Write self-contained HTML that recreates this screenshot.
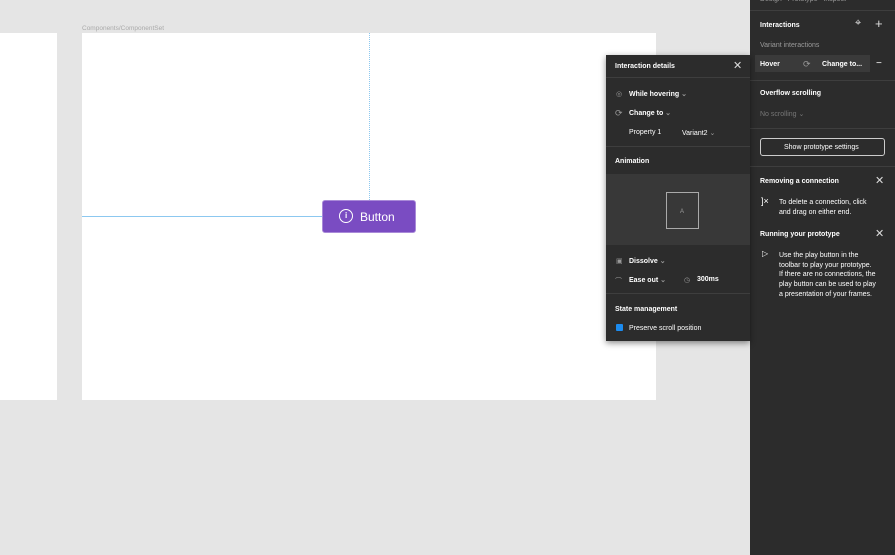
<!DOCTYPE html>
<html><head><style>
*{margin:0;padding:0;box-sizing:border-box}
body{width:895px;height:555px;background:#e5e5e5;position:relative;overflow:hidden;font-family:"Liberation Sans",sans-serif;}
.a{position:absolute}
.t{position:absolute;font-size:7px;color:#fff;white-space:nowrap;margin-top:1px}
.b{font-weight:bold}
.g{color:#9a9a9a}
.hr{position:absolute;height:1px;background:#3e3e3e}
.x{position:absolute;font-size:11px;color:#ddd}
</style></head><body>
<div class="a" style="left:0;top:33px;width:57px;height:367px;background:#fff"></div>
<div class="a" style="left:82px;top:33px;width:574px;height:367px;background:#fff"></div>
<div class="t" style="left:82px;top:24px;color:#aaa;font-size:6.5px">Components/ComponentSet</div>
<div class="a" style="left:369px;top:33px;width:0;height:167px;border-left:1px dotted #8cc8f0"></div>
<div class="a" style="left:82px;top:216px;width:240px;height:0;border-top:1px solid #8cc8f0"></div>
<div class="a" style="left:322px;top:200px;width:94px;height:33px;background:#7a4cc2;border-radius:3px;border:1px solid #a98ad8"></div>
<div class="a" style="left:339px;top:209px;width:14px;height:14px;border:1.5px solid #fff;border-radius:50%"></div>
<div class="t" style="left:345px;top:210px;font-size:8px;font-weight:bold">i</div>
<div class="t" style="left:360px;top:209px;font-size:12px">Button</div>

<div class="a" style="left:750px;top:0;width:145px;height:555px;background:#2c2c2c"></div>
<div class="hr" style="left:750px;top:10px;width:145px"></div>
<div class="t g" style="left:760px;top:-5px">Design &nbsp; Prototype &nbsp; Inspect</div>
<div class="t b" style="left:760px;top:21px">Interactions</div>
<div class="x" style="left:855px;top:17px">⌖</div>
<div class="x" style="left:875px;top:16px;font-size:13px">+</div>
<div class="t g" style="left:760px;top:41px">Variant interactions</div>
<div class="a" style="left:755px;top:55px;width:115px;height:17px;background:#3a3a3a"></div>
<div class="t b" style="left:760px;top:60px">Hover</div>
<div class="t g" style="left:803px;top:58px;font-size:9px">⟳</div>
<div class="t b" style="left:822px;top:60px">Change to...</div>
<div class="t" style="left:876px;top:57px;font-size:10px">−</div>
<div class="hr" style="left:750px;top:80px;width:145px"></div>
<div class="t b" style="left:760px;top:89px">Overflow scrolling</div>
<div class="t g" style="left:760px;top:109px;color:#777">No scrolling ⌄</div>
<div class="hr" style="left:750px;top:128px;width:145px"></div>
<div class="a" style="left:760px;top:138px;width:125px;height:18px;border:1px solid #ccc;border-radius:3px"></div>
<div class="t" style="left:784px;top:143px">Show prototype settings</div>
<div class="hr" style="left:750px;top:166px;width:145px"></div>
<div class="t b" style="left:760px;top:177px">Removing a connection</div>
<div class="x" style="left:875px;top:174px">✕</div>
<div class="t" style="left:761px;top:195px;font-size:9px">]×</div>
<div class="t" style="left:779px;top:197px;line-height:9.5px">To delete a connection, click<br>and drag on either end.</div>
<div class="t b" style="left:760px;top:230px">Running your prototype</div>
<div class="x" style="left:875px;top:227px">✕</div>
<div class="t" style="left:762px;top:248px;font-size:8px">▷</div>
<div class="t" style="left:779px;top:250px;line-height:9.7px">Use the play button in the<br>toolbar to play your prototype.<br>If there are no connections, the<br>play button can be used to play<br>a presentation of your frames.</div>

<div class="a" style="left:606px;top:55px;width:144px;height:286px;background:#2c2c2c;box-shadow:0 2px 6px rgba(0,0,0,.45)"></div>
<div class="t b" style="left:615px;top:62px">Interaction details</div>
<div class="x" style="left:733px;top:59px">✕</div>
<div class="hr" style="left:606px;top:77px;width:144px"></div>
<div class="t g" style="left:616px;top:89px">◎</div>
<div class="t b" style="left:629px;top:89px">While hovering <span class="g">⌄</span></div>
<div class="t g" style="left:615px;top:107px;font-size:9px">⟳</div>
<div class="t b" style="left:629px;top:108px">Change to <span class="g">⌄</span></div>
<div class="t" style="left:629px;top:128px">Property 1</div>
<div class="t" style="left:682px;top:128px">Variant2 <span class="g">⌄</span></div>
<div class="hr" style="left:606px;top:146px;width:144px"></div>
<div class="t b" style="left:615px;top:157px">Animation</div>
<div class="a" style="left:606px;top:174px;width:144px;height:71px;background:#383838"></div>
<div class="a" style="left:666px;top:192px;width:33px;height:37px;border:1.5px solid #aaa"></div>
<div class="t g" style="left:680px;top:208px;font-size:6px">A</div>
<div class="t g" style="left:616px;top:256px">▣</div>
<div class="t b" style="left:629px;top:256px">Dissolve <span class="g">⌄</span></div>
<div class="t g" style="left:615px;top:275px">⌒</div>
<div class="t b" style="left:629px;top:275px">Ease out <span class="g">⌄</span></div>
<div class="t g" style="left:684px;top:275px">◷</div>
<div class="t b" style="left:697px;top:275px">300ms</div>
<div class="hr" style="left:606px;top:293px;width:144px"></div>
<div class="t b" style="left:615px;top:305px">State management</div>
<div class="a" style="left:616px;top:324px;width:7px;height:7px;background:#1c8cf0;border-radius:1px"></div>
<div class="t" style="left:629px;top:324px">Preserve scroll position</div>
</body></html>
